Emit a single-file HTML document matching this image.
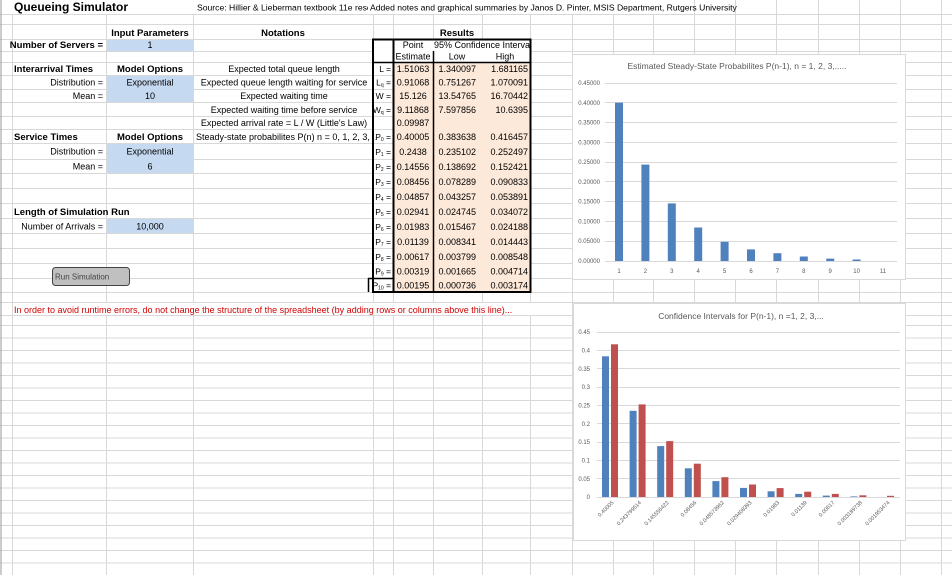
<!DOCTYPE html>
<html><head><meta charset="utf-8"><style>
html,body{margin:0;padding:0;background:#fff;}
svg{display:block;font-family:"Liberation Sans",sans-serif;}
.t{font-size:9px;fill:#000;}
.b{font-size:9.5px;font-weight:bold;fill:#000;}
.c{text-anchor:middle;}
.r{text-anchor:end;}
.ax{font-size:6px;fill:#595959;}
.lb{font-size:8.5px;fill:#000;text-anchor:end;}
.sb{font-size:5px;}
</style></head><body>
<svg width="952" height="575" viewBox="0 0 952 575" xmlns="http://www.w3.org/2000/svg">
<defs>
<pattern id="rows" x="0" y="325" width="952" height="12.5" patternUnits="userSpaceOnUse">
<line x1="0" y1="0.5" x2="952" y2="0.5" stroke="#d8d8d8" stroke-width="1"/>
</pattern>
</defs>
<rect width="952" height="575" fill="#fff"/>
<g stroke="#d8d8d8" stroke-width="1">
<line x1="0" y1="14.5" x2="952" y2="14.5"/><line x1="0" y1="24.5" x2="952" y2="24.5"/>
<line x1="0" y1="39.5" x2="952" y2="39.5"/><line x1="0" y1="51.5" x2="952" y2="51.5"/>
<line x1="0" y1="62.5" x2="952" y2="62.5"/><line x1="0" y1="75.5" x2="952" y2="75.5"/>
<line x1="0" y1="89.5" x2="952" y2="89.5"/><line x1="0" y1="102.5" x2="952" y2="102.5"/>
<line x1="0" y1="116.5" x2="952" y2="116.5"/><line x1="0" y1="129.5" x2="952" y2="129.5"/>
<line x1="0" y1="143.5" x2="952" y2="143.5"/><line x1="0" y1="159.5" x2="952" y2="159.5"/>
<line x1="0" y1="173.5" x2="952" y2="173.5"/><line x1="0" y1="188.5" x2="952" y2="188.5"/>
<line x1="0" y1="203.5" x2="952" y2="203.5"/><line x1="0" y1="218.5" x2="952" y2="218.5"/>
<line x1="0" y1="233.5" x2="952" y2="233.5"/><line x1="0" y1="248.5" x2="952" y2="248.5"/>
<line x1="0" y1="263.5" x2="952" y2="263.5"/><line x1="0" y1="278.5" x2="952" y2="278.5"/>
<line x1="0" y1="292.5" x2="952" y2="292.5"/><line x1="0" y1="302.5" x2="952" y2="302.5"/>
<line x1="0" y1="315.5" x2="952" y2="315.5"/>
</g>
<rect x="0" y="325" width="952" height="250" fill="url(#rows)"/>
<g stroke="#d8d8d8" stroke-width="1">
<line x1="12.5" y1="14" x2="12.5" y2="575"/><line x1="106.5" y1="14" x2="106.5" y2="575"/>
<line x1="193.5" y1="14" x2="193.5" y2="575"/><line x1="373.5" y1="14" x2="373.5" y2="575"/>
<line x1="393.5" y1="14" x2="393.5" y2="575"/><line x1="433.5" y1="14" x2="433.5" y2="575"/>
<line x1="482.5" y1="14" x2="482.5" y2="575"/><line x1="530.5" y1="14" x2="530.5" y2="575"/>
<line x1="572.5" y1="0" x2="572.5" y2="575"/><line x1="613.5" y1="0" x2="613.5" y2="575"/>
<line x1="653.5" y1="0" x2="653.5" y2="575"/><line x1="694.5" y1="0" x2="694.5" y2="575"/>
<line x1="735.5" y1="0" x2="735.5" y2="575"/><line x1="776.5" y1="0" x2="776.5" y2="575"/>
<line x1="818.5" y1="0" x2="818.5" y2="575"/><line x1="859.5" y1="0" x2="859.5" y2="575"/>
<line x1="900.5" y1="0" x2="900.5" y2="575"/><line x1="941.5" y1="0" x2="941.5" y2="575"/>
</g>
<line x1="1" y1="0" x2="1" y2="575" stroke="#9a9a9a"/>
<g fill="#c5d9f1">
<rect x="107" y="40" width="86" height="11"/>
<rect x="107" y="76" width="86" height="26"/>
<rect x="107" y="144" width="86" height="29"/>
<rect x="107" y="219" width="86" height="14"/>
</g>
<text x="14" y="11" style="font-size:12px;font-weight:bold">Queueing Simulator</text>
<rect x="195" y="0" width="178" height="14" fill="#fff"/>
<text x="197" y="10.5" class="t" style="font-size:8.6px">Source: Hillier &amp; Lieberman textbook 11e resourc</text>
<rect x="368" y="0" width="300" height="14" fill="#fff"/>
<text x="370" y="10.5" class="t" style="font-size:8.6px">Added notes and graphical summaries by Janos D. Pinter, MSIS Department, Rutgers University</text>
<text x="150" y="36" class="b c">Input Parameters</text>
<text x="283" y="36" class="b c">Notations</text>
<text x="103" y="48" class="b r">Number of Servers =</text>
<text x="150" y="48" class="t c">1</text>
<text x="14" y="72" class="b">Interarrival Times</text>
<text x="150" y="72" class="b c">Model Options</text>
<text x="103" y="85.5" class="t r">Distribution =</text>
<text x="150" y="85.5" class="t c">Exponential</text>
<text x="103" y="99" class="t r">Mean =</text>
<text x="150" y="99" class="t c">10</text>
<text x="14" y="140" class="b">Service Times</text>
<text x="150" y="140" class="b c">Model Options</text>
<text x="103" y="154.5" class="t r">Distribution =</text>
<text x="150" y="154.5" class="t c">Exponential</text>
<text x="103" y="169.5" class="t r">Mean =</text>
<text x="150" y="169.5" class="t c">6</text>
<text x="14" y="215" class="b">Length of Simulation Run</text>
<text x="103" y="229.5" class="t r">Number of Arrivals =</text>
<text x="150" y="229.5" class="t c">10,000</text>
<text x="284" y="72" class="t c">Expected total queue length</text>
<text x="284" y="85.5" class="t c">Expected queue length waiting for service</text>
<text x="284" y="99" class="t c">Expected waiting time</text>
<text x="284" y="113" class="t c">Expected waiting time before service</text>
<text x="284" y="126" class="t c">Expected arrival rate = L / W (Little's Law)</text>
<rect x="195" y="130" width="177" height="13" fill="#fff"/>
<text x="196" y="140" class="t">Steady-state probabilites P(n) n = 0, 1, 2, 3, ..</text>
<rect x="52.5" y="267.5" width="77" height="18" rx="3" fill="#c0c0c0" stroke="#444"/>
<text x="55" y="279.5" style="font-size:8px;fill:#444">Run Simulation</text>
<rect x="13" y="303" width="530" height="12" fill="#fff"/>
<text x="14" y="313" class="t" style="fill:#d00000">In order to avoid runtime errors, do not change the structure of the spreadsheet (by adding rows or columns above this line)...</text>
<rect x="434" y="25" width="48" height="14" fill="#fff"/>
<text x="457" y="36" class="b c">Results</text>
<rect x="394" y="63" width="136" height="229" fill="#fde9d9"/>
<rect x="373" y="40" width="157" height="22" fill="#fff"/>
<text x="413" y="48" class="t c">Point</text>
<text x="434" y="48" class="t">95% Confidence Interva</text>
<text x="413" y="59.5" class="t c">Estimate</text>
<text x="457" y="59.5" class="t c">Low</text>
<text x="505" y="59.5" class="t c">High</text>
<g stroke="#000" fill="none">
<rect x="373" y="39.5" width="157.5" height="252.5" stroke-width="2"/>
<line x1="373" y1="62.5" x2="531" y2="62.5" stroke-width="1.5"/>
<line x1="393.5" y1="40" x2="393.5" y2="292" stroke-width="2"/>
<line x1="433.5" y1="51" x2="433.5" y2="292" stroke-width="1.5"/>
<line x1="368" y1="278.5" x2="394" y2="278.5" stroke-width="1.5"/>
<line x1="368.5" y1="278" x2="368.5" y2="292" stroke-width="1.5"/>
</g>
<g>
<text x="391" y="72" class="lb">L =</text><text x="413" y="72" class="t c">1.51063</text><text x="476" y="72" class="t r">1.340097</text><text x="528" y="72" class="t r">1.681165</text>
<text x="391" y="85.5" class="lb">L<tspan class="sb" dy="1">q</tspan><tspan dy="-1"> =</tspan></text><text x="413" y="85.5" class="t c">0.91068</text><text x="476" y="85.5" class="t r">0.751267</text><text x="528" y="85.5" class="t r">1.070091</text>
<text x="391" y="99" class="lb">W =</text><text x="413" y="99" class="t c">15.126</text><text x="476" y="99" class="t r">13.54765</text><text x="528" y="99" class="t r">16.70442</text>
<text x="391" y="113" class="lb">W<tspan class="sb" dy="1">q</tspan><tspan dy="-1"> =</tspan></text><text x="413" y="113" class="t c">9.11868</text><text x="476" y="113" class="t r">7.597856</text><text x="528" y="113" class="t r">10.6395</text>
<text x="413" y="126" class="t c">0.09987</text>
<text x="391" y="140" class="lb">P<tspan class="sb" dy="1">0</tspan><tspan dy="-1"> =</tspan></text><text x="413" y="140" class="t c">0.40005</text><text x="476" y="140" class="t r">0.383638</text><text x="528" y="140" class="t r">0.416457</text>
<text x="391" y="155" class="lb">P<tspan class="sb" dy="1">1</tspan><tspan dy="-1"> =</tspan></text><text x="413" y="155" class="t c">0.2438</text><text x="476" y="155" class="t r">0.235102</text><text x="528" y="155" class="t r">0.252497</text>
<text x="391" y="170" class="lb">P<tspan class="sb" dy="1">2</tspan><tspan dy="-1"> =</tspan></text><text x="413" y="170" class="t c">0.14556</text><text x="476" y="170" class="t r">0.138692</text><text x="528" y="170" class="t r">0.152421</text>
<text x="391" y="185" class="lb">P<tspan class="sb" dy="1">3</tspan><tspan dy="-1"> =</tspan></text><text x="413" y="185" class="t c">0.08456</text><text x="476" y="185" class="t r">0.078289</text><text x="528" y="185" class="t r">0.090833</text>
<text x="391" y="200" class="lb">P<tspan class="sb" dy="1">4</tspan><tspan dy="-1"> =</tspan></text><text x="413" y="200" class="t c">0.04857</text><text x="476" y="200" class="t r">0.043257</text><text x="528" y="200" class="t r">0.053891</text>
<text x="391" y="215" class="lb">P<tspan class="sb" dy="1">5</tspan><tspan dy="-1"> =</tspan></text><text x="413" y="215" class="t c">0.02941</text><text x="476" y="215" class="t r">0.024745</text><text x="528" y="215" class="t r">0.034072</text>
<text x="391" y="230" class="lb">P<tspan class="sb" dy="1">6</tspan><tspan dy="-1"> =</tspan></text><text x="413" y="230" class="t c">0.01983</text><text x="476" y="230" class="t r">0.015467</text><text x="528" y="230" class="t r">0.024188</text>
<text x="391" y="245" class="lb">P<tspan class="sb" dy="1">7</tspan><tspan dy="-1"> =</tspan></text><text x="413" y="245" class="t c">0.01139</text><text x="476" y="245" class="t r">0.008341</text><text x="528" y="245" class="t r">0.014443</text>
<text x="391" y="260" class="lb">P<tspan class="sb" dy="1">8</tspan><tspan dy="-1"> =</tspan></text><text x="413" y="260" class="t c">0.00617</text><text x="476" y="260" class="t r">0.003799</text><text x="528" y="260" class="t r">0.008548</text>
<text x="391" y="274.5" class="lb">P<tspan class="sb" dy="1">9</tspan><tspan dy="-1"> =</tspan></text><text x="413" y="274.5" class="t c">0.00319</text><text x="476" y="274.5" class="t r">0.001665</text><text x="528" y="274.5" class="t r">0.004714</text>
<text x="391" y="288.5" class="lb">P<tspan class="sb" dy="1">10</tspan><tspan dy="-1"> =</tspan></text><text x="413" y="288.5" class="t c">0.00195</text><text x="476" y="288.5" class="t r">0.000736</text><text x="528" y="288.5" class="t r">0.003174</text>
</g>
<rect x="572.5" y="54.5" width="333" height="225" fill="#fff" stroke="#d9d9d9"/>
<text x="737" y="69" class="c" style="font-size:8.5px;fill:#595959">Estimated Steady-State Probabilites P(n-1), n = 1, 2, 3,.....</text>
<g stroke="#d9d9d9">
<line x1="605" y1="261.5" x2="897" y2="261.5"/><line x1="605" y1="241.5" x2="897" y2="241.5"/>
<line x1="605" y1="221.5" x2="897" y2="221.5"/><line x1="605" y1="201.5" x2="897" y2="201.5"/>
<line x1="605" y1="181.5" x2="897" y2="181.5"/><line x1="605" y1="162.5" x2="897" y2="162.5"/>
<line x1="605" y1="142.5" x2="897" y2="142.5"/><line x1="605" y1="122.5" x2="897" y2="122.5"/>
<line x1="605" y1="102.5" x2="897" y2="102.5"/><line x1="605" y1="83.5" x2="897" y2="83.5"/>
</g>
<g class="ax">
<text x="600" y="263" class="r">0.00000</text><text x="600" y="243" class="r">0.05000</text>
<text x="600" y="223.5" class="r">0.10000</text><text x="600" y="203.5" class="r">0.15000</text>
<text x="600" y="184" class="r">0.20000</text><text x="600" y="164" class="r">0.25000</text>
<text x="600" y="144.5" class="r">0.30000</text><text x="600" y="124.5" class="r">0.35000</text>
<text x="600" y="105" class="r">0.40000</text><text x="600" y="85" class="r">0.45000</text>
</g>
<g fill="#4f81bd">
<rect x="615" y="102.7" width="8" height="158.3"/>
<rect x="641.4" y="164.6" width="8" height="96.4"/>
<rect x="667.8" y="203.4" width="8" height="57.6"/>
<rect x="694.2" y="227.5" width="8" height="33.5"/>
<rect x="720.6" y="241.8" width="8" height="19.2"/>
<rect x="747" y="249.4" width="8" height="11.6"/>
<rect x="773.4" y="253.2" width="8" height="7.8"/>
<rect x="799.8" y="256.5" width="8" height="4.5"/>
<rect x="826.2" y="258.6" width="8" height="2.4"/>
<rect x="852.6" y="259.5" width="8" height="1.5"/>
</g>
<g class="ax">
<text x="619" y="273" class="c">1</text><text x="645.4" y="273" class="c">2</text>
<text x="671.8" y="273" class="c">3</text><text x="698.2" y="273" class="c">4</text>
<text x="724.6" y="273" class="c">5</text><text x="751" y="273" class="c">6</text>
<text x="777.4" y="273" class="c">7</text><text x="803.8" y="273" class="c">8</text>
<text x="830.2" y="273" class="c">9</text><text x="856.6" y="273" class="c">10</text>
<text x="883" y="273" class="c">11</text>
</g>
<rect x="573.5" y="303.5" width="332" height="237" fill="#fff" stroke="#d9d9d9"/>
<text x="741" y="319" class="c" style="font-size:8.5px;fill:#595959">Confidence Intervals for P(n-1), n =1, 2, 3,...</text>
<g stroke="#d9d9d9">
<line x1="597" y1="497.5" x2="900" y2="497.5"/><line x1="597" y1="478.5" x2="900" y2="478.5"/>
<line x1="597" y1="460.5" x2="900" y2="460.5"/><line x1="597" y1="442.5" x2="900" y2="442.5"/>
<line x1="597" y1="423.5" x2="900" y2="423.5"/><line x1="597" y1="405.5" x2="900" y2="405.5"/>
<line x1="597" y1="387.5" x2="900" y2="387.5"/><line x1="597" y1="368.5" x2="900" y2="368.5"/>
<line x1="597" y1="350.5" x2="900" y2="350.5"/><line x1="597" y1="332.5" x2="900" y2="332.5"/>
</g>
<g class="ax">
<text x="590" y="499" class="r">0</text><text x="590" y="481" class="r">0.05</text>
<text x="590" y="462.5" class="r">0.1</text><text x="590" y="444" class="r">0.15</text>
<text x="590" y="426" class="r">0.2</text><text x="590" y="407.5" class="r">0.25</text>
<text x="590" y="389" class="r">0.3</text><text x="590" y="371" class="r">0.35</text>
<text x="590" y="352.5" class="r">0.4</text><text x="590" y="334" class="r">0.45</text>
</g>
<g fill="#4f81bd">
<rect x="602" y="356.3" width="7" height="140.7"/>
<rect x="629.6" y="410.8" width="7" height="86.2"/>
<rect x="657.2" y="446.1" width="7" height="50.9"/>
<rect x="684.8" y="468.3" width="7" height="28.7"/>
<rect x="712.4" y="481.1" width="7" height="15.9"/>
<rect x="740" y="487.9" width="7" height="9.1"/>
<rect x="767.6" y="491.3" width="7" height="5.7"/>
<rect x="795.2" y="493.9" width="7" height="3.1"/>
<rect x="822.8" y="495.6" width="7" height="1.4"/>
<rect x="850.4" y="496.4" width="7" height="0.6"/>
</g>
<g fill="#c0504d">
<rect x="611" y="344.3" width="7" height="152.7"/>
<rect x="638.6" y="404.4" width="7" height="92.6"/>
<rect x="666.2" y="441.1" width="7" height="55.9"/>
<rect x="693.8" y="463.7" width="7" height="33.3"/>
<rect x="721.4" y="477.2" width="7" height="19.8"/>
<rect x="749" y="484.5" width="7" height="12.5"/>
<rect x="776.6" y="488.1" width="7" height="8.9"/>
<rect x="804.2" y="491.7" width="7" height="5.3"/>
<rect x="831.8" y="493.9" width="7" height="3.1"/>
<rect x="859.4" y="495.3" width="7" height="1.7"/>
<rect x="887" y="495.8" width="7" height="1.2"/>
</g>
<g class="ax" style="font-size:5.5px">
<text transform="translate(614,503) rotate(-45)" class="r">0.40005</text>
<text transform="translate(641.6,503) rotate(-45)" class="r">0.243799514</text>
<text transform="translate(669.2,503) rotate(-45)" class="r">0.145556422</text>
<text transform="translate(696.8,503) rotate(-45)" class="r">0.08456</text>
<text transform="translate(724.4,503) rotate(-45)" class="r">0.048573962</text>
<text transform="translate(752,503) rotate(-45)" class="r">0.029408393</text>
<text transform="translate(779.6,503) rotate(-45)" class="r">0.01983</text>
<text transform="translate(807.2,503) rotate(-45)" class="r">0.01139</text>
<text transform="translate(834.8,503) rotate(-45)" class="r">0.00617</text>
<text transform="translate(862.4,503) rotate(-45)" class="r">0.003189738</text>
<text transform="translate(890,503) rotate(-45)" class="r">0.001953474</text>
</g>
</svg>
</body></html>
